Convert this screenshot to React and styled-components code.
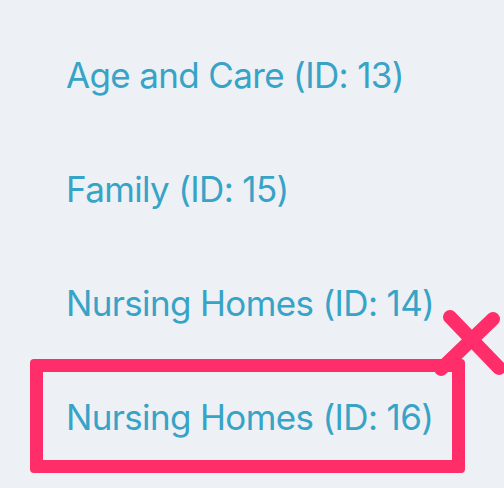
import React from 'react';
import styled, { createGlobalStyle } from 'styled-components';

const GlobalStyle = createGlobalStyle`
  html, body {
    margin: 0;
    padding: 0;
    background: #edf1f6;
  }
  body {
    font-family: Inter, "Liberation Sans", Arial, sans-serif;
  }
`;

const Page = styled.div`
  width: 504px;
  height: 488px;
  overflow: hidden;
  padding: 17px 0 0 30px;
  box-sizing: border-box;
  background: #edf1f6;
`;

const List = styled.ul`
  list-style: none;
  margin: 0;
  padding: 0;
  width: 435px;
`;

const Row = styled.li`
  position: relative;
  height: 114px;
  display: flex;
  align-items: center;
  box-sizing: border-box;
  border: 13px solid ${(p) => (p.$selected ? '#ff2d6a' : 'transparent')};
  border-left-width: ${(p) => (p.$selected ? '13px' : '0')};
  padding-left: ${(p) => (p.$selected ? '23px' : '36px')};
  border-radius: 4px;
`;

const Label = styled.span`
  font-size: 35px;
  font-weight: 400;
  letter-spacing: -0.65px;
  color: #37a3c7;
  white-space: nowrap;
  margin-top: 2px;
  -webkit-font-smoothing: antialiased;
`;

const Close = styled.svg`
  position: absolute;
  right: -53px;
  top: -66px;
  width: 70px;
  height: 70px;
  overflow: visible;
`;

const categories = [
  { id: 13, name: 'Age and Care' },
  { id: 15, name: 'Family' },
  { id: 14, name: 'Nursing Homes' },
  { id: 16, name: 'Nursing Homes', selected: true },
];

export default function App() {
  return (
    <>
      <GlobalStyle />
      <Page>
        <List>
          {categories.map((c) => (
            <Row key={c.id} $selected={c.selected}>
              <Label>
                {c.name} (ID: {c.id})
              </Label>
              {c.selected && (
                <Close viewBox="0 0 70 70">
                  <g stroke="#ff2d6a" strokeWidth="14" strokeLinecap="round">
                    <line x1="15" y1="11" x2="64" y2="62" />
                    <line x1="58" y1="13" x2="6" y2="63" />
                  </g>
                </Close>
              )}
            </Row>
          ))}
        </List>
      </Page>
    </>
  );
}
